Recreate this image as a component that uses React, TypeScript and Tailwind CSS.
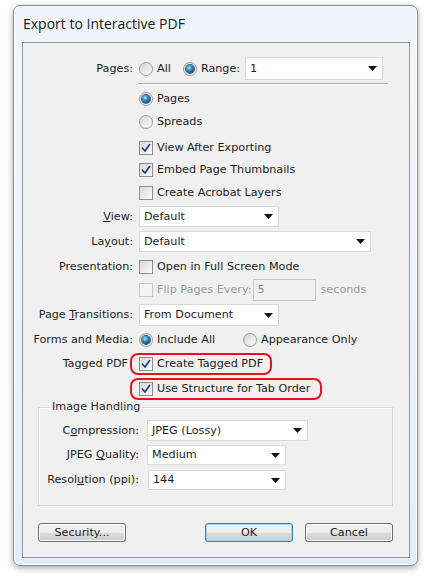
import type { ReactNode } from 'react';

function Radio({ on }: { on?: boolean }) {
  return (
    <span className="ml-[1px] flex h-[14px] w-[14px] shrink-0 items-center justify-center rounded-full border border-[#9c9c9c] bg-[linear-gradient(135deg,#d6d6d6,#fbfbfb)]">
      {on && (
        <span className="h-[8px] w-[8px] rounded-full bg-[radial-gradient(circle_at_40%_35%,#a8e2ff_0%,#2b8ac8_40%,#0a2f52_85%)] shadow-[0_0_0_1px_#3d5f7a]" />
      )}
    </span>
  );
}

function Check({ checked, disabled }: { checked?: boolean; disabled?: boolean }) {
  return (
    <span
      className={`ml-[1px] flex h-[14px] w-[14px] shrink-0 items-center justify-center border ${
        disabled ? 'border-[#c8c8c8] bg-[#f3f3f3]' : 'border-[#8e8f8f] bg-[linear-gradient(135deg,#d8d8d8,#fbfbfb)]'
      }`}
    >
      {checked && (
        <svg width="10" height="10" viewBox="0 0 10 10">
          <path d="M1.5 5.2 L4 8 L8.6 1.6" fill="none" stroke="#21406e" strokeWidth="1.7" strokeLinecap="round" strokeLinejoin="round" />
        </svg>
      )}
    </span>
  );
}

function Select({ value, w }: { value: string; w: string }) {
  return (
    <div className={`flex h-full items-center justify-between border border-[#dadada] bg-white pl-[4px] pr-[5px] ${w}`}>
      <span>{value}</span>
      <svg width="9" height="5" viewBox="0 0 9 5">
        <path d="M0 0h9L4.5 5z" fill="#111" />
      </svg>
    </div>
  );
}

function Row({ label, className, children }: { label?: ReactNode; className: string; children: ReactNode }) {
  return (
    <div className={`flex items-center ${className}`}>
      <div className="w-[110px] shrink-0 text-right">{label}</div>
      <div className="ml-[5px] flex h-full items-center gap-[4px]">{children}</div>
    </div>
  );
}

function GroupRow({ label, className, children }: { label: ReactNode; className: string; children: ReactNode }) {
  return (
    <div className={`flex items-center ${className}`}>
      <div className="w-[100px] shrink-0 text-right">{label}</div>
      <div className="ml-[8px] flex h-full items-center">{children}</div>
    </div>
  );
}

function Button({ children, primary }: { children: ReactNode; primary?: boolean }) {
  return (
    <div
      className={`flex h-[19px] w-[88px] items-center justify-center rounded-[3px] border bg-[linear-gradient(180deg,#f3f3f3_0%,#ebebeb_50%,#dcdcdc_51%,#cfcfcf_100%)] ${
        primary ? 'border-[#3c7fb1] shadow-[inset_0_0_0_1px_#9fd7f2]' : 'border-[#707070] shadow-[inset_0_0_0_1px_#fbfbfb]'
      }`}
    >
      {children}
    </div>
  );
}

export default function App() {
  return (
    <div className="h-[579px] w-full overflow-hidden bg-white pt-[5px] pl-[13px] text-[11.2px] leading-none text-[#1e1e1e] [font-family:'DejaVu_Sans',sans-serif]">
      <div className="h-[561px] w-[405px] rounded-[7px] border border-[#7f8f9f] bg-[linear-gradient(180deg,#edf3fa_0%,#f3f7fc_10%,#e4edf7_100%)] shadow-[0_2px_6px_rgba(0,0,0,0.35),inset_0_0_0_1px_#ffffff]">
        <div className="h-[36px] pt-[8px] pl-[9px] text-[14px] leading-[20px] text-[#1b1b1b] [font-family:'Open_Sans',sans-serif]">
          Export to Interactive PDF
        </div>
        <div className="ml-[8px] h-[516px] w-[388px] border border-[#8c99a6] bg-[#f0f0f0] pt-[14px]">
          <Row label="Pages:" className="h-[23px]">
            <Radio />
            <span>All</span>
            <span className="ml-[3px]" />
            <Radio on />
            <span>Range:</span>
            <div className="ml-[1px] h-full">
              <Select value="1" w="w-[138px]" />
            </div>
          </Row>
          <div className="mt-[3px] ml-[115px] h-[2px] w-[250px] border-t border-b border-t-[#a9a9a9] border-b-white" />
          <Row className="mt-[3px] h-[22px]">
            <Radio on />
            <span>Pages</span>
          </Row>
          <Row className="mt-[1px] h-[22px]">
            <Radio />
            <span>Spreads</span>
          </Row>
          <Row className="mt-[4px] h-[22px]">
            <Check checked />
            <span>View After Exporting</span>
          </Row>
          <Row className="h-[22px]">
            <Check checked />
            <span>Embed Page Thumbnails</span>
          </Row>
          <Row className="mt-[1px] h-[22px]">
            <Check />
            <span>Create Acrobat Layers</span>
          </Row>
          <Row
            label={
              <>
                <span className="underline">V</span>iew:
              </>
            }
            className="mt-[2px] h-[21px]"
          >
            <div className="ml-[1px] h-full">
              <Select value="Default" w="w-[140px]" />
            </div>
          </Row>
          <Row
            label={
              <>
                La<span className="underline">y</span>out:
              </>
            }
            className="mt-[4px] h-[21px]"
          >
            <div className="ml-[1px] h-full">
              <Select value="Default" w="w-[232px]" />
            </div>
          </Row>
          <Row label="Presentation:" className="mt-[4px] h-[22px]">
            <Check />
            <span>Open in Full Screen Mode</span>
          </Row>
          <Row className="mt-[1px] h-[22px]">
            <Check disabled />
            <span className="text-[#9b9b9b]">Flip Pages Every:</span>
            <div className="-ml-[3px] flex h-full w-[63px] items-center border border-[#c6c6c6] bg-[#f0f0f0] pl-[4px] text-[#8a8a8a]">5</div>
            <span className="ml-[1px] text-[#9b9b9b]">seconds</span>
          </Row>
          <Row
            label={
              <>
                Page <span className="underline">T</span>ransitions:
              </>
            }
            className="mt-[3px] h-[22px]"
          >
            <div className="ml-[1px] h-full">
              <Select value="From Document" w="w-[140px]" />
            </div>
          </Row>
          <Row label="Forms and Media:" className="mt-[3px] h-[22px]">
            <Radio on />
            <span className="w-[81px]">Include All</span>
            <Radio />
            <span>Appearance Only</span>
          </Row>
          <div className="mt-[2px] flex h-[22px] items-center">
            <div className="w-[110px] shrink-0 pr-[5px] text-right">Tagged PDF</div>
            <div className="-ml-[3px] flex h-full w-[142px] items-center gap-[4px] rounded-[8px] border-2 border-[#e3141b] pl-[6px]">
              <Check checked />
              <span>Create Tagged PDF</span>
            </div>
          </div>
          <div className="mt-[3px] flex h-[22px] items-center">
            <div className="w-[110px] shrink-0" />
            <div className="-ml-[3px] flex h-full w-[192px] items-center gap-[4px] rounded-[8px] border-2 border-[#e3141b] pl-[6px]">
              <Check checked />
              <span>Use Structure for Tab Order</span>
            </div>
          </div>
          <fieldset className="ml-[15px] w-[355px] border border-[#d3d9de] pb-[15px] shadow-[inset_1px_1px_0_#ffffff]">
            <legend className="ml-[11px] px-[2px] leading-[14px] text-[#2a2a2a]">Image Handling</legend>
            <GroupRow
              label={
                <>
                  C<span className="underline">o</span>mpression:
                </>
              }
              className="mt-[6px] h-[21px]"
            >
              <Select value="JPEG (Lossy)" w="w-[161px]" />
            </GroupRow>
            <GroupRow
              label={
                <>
                  JPEG <span className="underline">Q</span>uality:
                </>
              }
              className="mt-[4px] h-[20px]"
            >
              <Select value="Medium" w="w-[139px]" />
            </GroupRow>
            <GroupRow
              label={
                <>
                  Resol<span className="underline">u</span>tion (ppi):
                </>
              }
              className="mt-[5px] h-[20px]"
            >
              <div className="ml-[1px] h-full">
                <Select value="144" w="w-[138px]" />
              </div>
            </GroupRow>
          </fieldset>
          <div className="mt-[17px] flex items-center justify-between pr-[16px] pl-[15px]">
            <Button>Security...</Button>
            <div className="flex gap-[12px]">
              <Button primary>OK</Button>
              <Button>Cancel</Button>
            </div>
          </div>
        </div>
      </div>
    </div>
  );
}
